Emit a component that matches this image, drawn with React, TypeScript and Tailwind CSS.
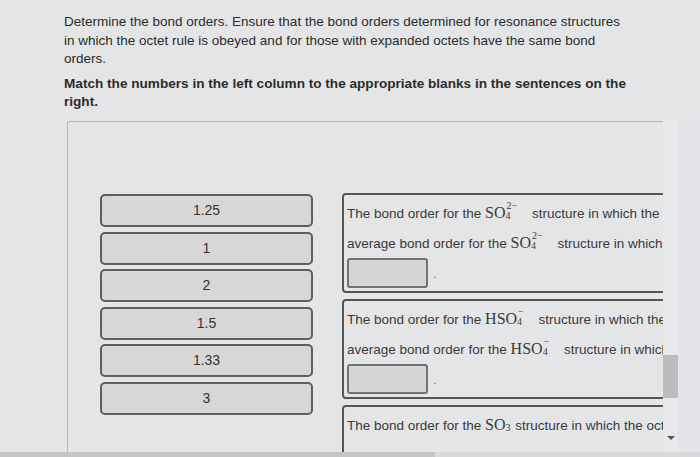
const sans = { fontFamily: "'Liberation Sans', Arial, sans-serif" };

const tiles = ["1.25", "1", "2", "1.5", "1.33", "3"];

function Ion({ base, sub, sup }: { base: string; sub?: string; sup?: string }) {
  return (
    <span className="whitespace-nowrap">
      <span className="font-['Liberation_Serif',serif] text-[16px]">{base}</span>
      <span
        className={
          sup
            ? "inline-flex flex-col align-[9px] text-[10px] leading-[10px] font-['Liberation_Serif',serif] mr-[11px]"
            : "inline-flex flex-col align-[9px] text-[10px] leading-[10px] font-['Liberation_Serif',serif] mr-[1px]"
        }
      >
        <span className="h-[10px] pl-[1px]">{sup ? sup : "\u00a0"}</span>
        <span className="h-[10px]">{sub}</span>
      </span>
    </span>
  );
}

function Blank() {
  return <span className="inline-block w-[81px] h-[30px] border-2 border-[#727272] rounded-[3px] bg-[#d6d6d6]" />;
}

function Card({ children }: { children: React.ReactNode }) {
  return (
    <div className="w-[900px] h-[100px] shrink-0 border-2 border-[#555] rounded-[4px] pl-[3px] pt-[3px] text-[13.5px] leading-[30px] text-[#3a3a3a] whitespace-nowrap overflow-hidden">
      {children}
    </div>
  );
}

export default function App() {
  return (
    <div className="w-[700px] h-[457px] bg-[#e4e5e7] flex flex-col overflow-hidden" style={sans}>
      {/* question text */}
      <div className="h-[121px] shrink-0 pl-[64px] pt-[13px] w-[629px] text-[13.5px] leading-[18.5px] text-[#2c2c2c]">
        <p>
          Determine the bond orders. Ensure that the bond orders determined for resonance structures in which the octet
          rule is obeyed and for those with expanded octets have the same bond orders.
        </p>
        <p className="mt-[6px] font-bold text-[13.6px]">
          Match the numbers in the left column to the appropriate blanks in the sentences on the right.
        </p>
      </div>

      <div className="flex-1 flex min-h-0">
        <div className="w-[663px] shrink-0 pl-[67px] overflow-hidden">
          <div className="h-full w-[700px] border-l border-t border-[#b3b4b6] rounded-tl-[3px] flex pt-[72px] pl-[32px] gap-[29px]">
            <div className="w-[213px] shrink-0 flex flex-col gap-[4.6px]">
              {tiles.map((t) => (
                <div
                  key={t}
                  className="h-[33px] border-2 border-[#5f5f5f] rounded-[5px] bg-[#d7d7d8] flex items-center justify-center text-[14px] text-[#333]"
                >
                  {t}
                </div>
              ))}
            </div>

            <div className="flex flex-col gap-[6px] -mt-[1px]">
              <Card>
                <div className="h-[30px]">
                  The bond order for the <Ion base="SO" sub="4" sup="2−" /> structure in which the octet rule is obeyed is
                  equal to the
                </div>
                <div className="h-[30px]">
                  average bond order for the <Ion base="SO" sub="4" sup="2−" /> structure in which sulfur has an expanded
                  octet:
                </div>
                <div className="flex items-end gap-[5px] leading-none">
                  <Blank />
                  <span className="text-[#777] pb-[8px]">.</span>
                </div>
              </Card>
              <Card>
                <div className="h-[30px]">
                  The bond order for the <Ion base="HSO" sub="4" sup="−" /> structure in which the octet rule is obeyed is
                  equal to the
                </div>
                <div className="h-[30px]">
                  average bond order for the <Ion base="HSO" sub="4" sup="−" /> structure in which sulfur has an expanded
                  octet:
                </div>
                <div className="flex items-end gap-[5px] leading-none">
                  <Blank />
                  <span className="text-[#777] pb-[8px]">.</span>
                </div>
              </Card>
              <Card>
                <div className="h-[30px]">
                  The bond order for the <Ion base="SO" sub="3" /> structure in which the octet rule is obeyed is equal to
                  the
                </div>
              </Card>
            </div>
          </div>
        </div>

        {/* vertical scrollbar */}
        <div className="w-[15px] shrink-0 flex flex-col bg-[#e8e9ea]">
          <div className="h-[234px]" />
          <div className="h-[43px] bg-[#bcbcbd]" />
          <div className="flex-1 flex items-end justify-center pb-[12px]">
            <span className="w-0 h-0 border-l-[4px] border-r-[4px] border-t-[4px] border-l-transparent border-r-transparent border-t-[#555]" />
          </div>
        </div>
        <div className="flex-1 bg-[#e2e4e7]" />
      </div>

      {/* horizontal scrollbar */}
      <div className="h-[5px] shrink-0 flex bg-[#d9dadc]">
        <div className="w-[435px] bg-[#c4c5c7]" />
      </div>
    </div>
  );
}
